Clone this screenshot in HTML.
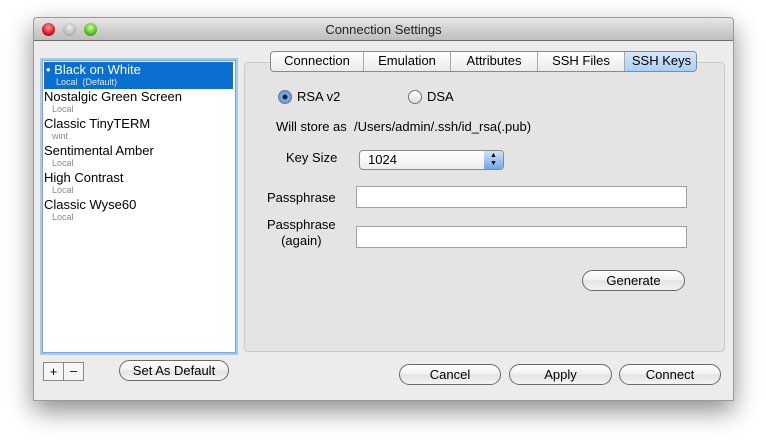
<!DOCTYPE html>
<html><head><style>
*{margin:0;padding:0;box-sizing:border-box}
body{width:766px;height:448px;background:#fff;font-family:"Liberation Sans",sans-serif;font-size:13px;color:#000;position:relative;overflow:hidden}
.a{position:absolute}
.win{left:33px;top:17px;width:701px;height:384px;background:#ececec;border:1px solid #9a9a9a;box-shadow:0 10px 25px rgba(0,0,0,.45);border-radius:4px 4px 0 0}
.title{left:0;top:0;width:699px;height:23px;background:linear-gradient(#e6e6e6,#bdbdbd);border-bottom:1px solid #6e6e6e;border-radius:4px 4px 0 0;text-align:center;line-height:23px;font-size:13px;color:#222}
.dot{width:13px;height:13px;border-radius:50%;top:5px}
.btn{border:1px solid #6a6a6a;border-radius:11px;background:linear-gradient(#fff,#f0f0f0 50%,#e2e2e2 51%,#f4f4f4);text-align:center;font-size:13px;height:21px;line-height:19px}
.tab{top:0;height:20px;line-height:18px;text-align:center;border-right:1px solid #a8a8a8}
.it{left:0;width:189px;padding-left:0;height:27px}
.it b{font-weight:normal;display:block;font-size:13px;line-height:14px;margin-top:1px}
.it i{font-style:normal;display:block;font-size:9px;color:#8a8a8a;padding-left:8px;line-height:10px}
.fld{background:#fff;border:1px solid #a0a0a0;height:22px}
.rad{width:14px;height:14px;border-radius:50%;border:1px solid #777}
</style></head><body>
<div class="a win">
 <div class="a title">Connection Settings
  <div class="a dot" style="left:8px;background:radial-gradient(circle at 50% 35%,#f99,#d12 60%,#900)"></div>
  <div class="a dot" style="left:29px;background:radial-gradient(circle at 50% 35%,#eee,#bbb 60%,#888)"></div>
  <div class="a dot" style="left:50px;background:radial-gradient(circle at 50% 35%,#cf9,#5b2 60%,#270)"></div>
 </div>
 <div class="a" style="left:8px;top:42px;width:194px;height:293px;background:#fff;border:1px solid #7aa7e0;box-shadow:0 0 0 2px #a9c8ee"></div>
 <div class="a" style="left:10px;top:44px;width:190px;height:289px;overflow:hidden">
  <div class="a it" style="top:0;background:#0a6fd1;color:#fff"><b style="padding-left:2px">&#8226; Black on White</b><i style="color:#dfe8f5;padding-left:12px">Local&nbsp; (Default)</i></div>
  <div class="a it" style="top:27px"><b>Nostalgic Green Screen</b><i>Local</i></div>
  <div class="a it" style="top:54px"><b>Classic TinyTERM</b><i>wint</i></div>
  <div class="a it" style="top:81px"><b>Sentimental Amber</b><i>Local</i></div>
  <div class="a it" style="top:108px"><b>High Contrast</b><i>Local</i></div>
  <div class="a it" style="top:135px"><b>Classic Wyse60</b><i>Local</i></div>
 </div>
 <div class="a" style="left:9px;top:344px;width:41px;height:19px;border:1px solid #8a8a8a;background:#f6f6f6">
  <div class="a" style="left:0;top:0;width:20px;height:17px;border-right:1px solid #8a8a8a;text-align:center;line-height:17px">+</div>
  <div class="a" style="left:20px;top:0;width:19px;height:17px;text-align:center;line-height:16px">–</div>
 </div>
 <div class="a btn" style="left:85px;top:342px;width:110px">Set As Default</div>
 <div class="a" style="left:210px;top:44px;width:481px;height:290px;background:#e4e4e4;border:1px solid #c9c9c9;border-radius:4px"></div>
 <div class="a" style="left:236px;top:33px;width:427px;height:21px;border:1px solid #8a8a8a;border-radius:4px;background:linear-gradient(#fff,#ececec);overflow:hidden">
  <div class="a tab" style="left:0;width:93px">Connection</div>
  <div class="a tab" style="left:93px;width:87px">Emulation</div>
  <div class="a tab" style="left:180px;width:87px">Attributes</div>
  <div class="a tab" style="left:267px;width:87px">SSH Files</div>
  <div class="a tab" style="left:354px;width:73px;border:none;background:linear-gradient(#d6e8fb,#a8cdf3)">SSH Keys</div>
 </div>
 <div class="a rad" style="left:244px;top:72px;background:radial-gradient(circle,#123 0 2px,#7fb2ea 3px,#3d86d8)"></div>
 <div class="a" style="left:263px;top:71px">RSA v2</div>
 <div class="a rad" style="left:374px;top:72px;background:linear-gradient(#fff,#ddd)"></div>
 <div class="a" style="left:393px;top:71px">DSA</div>
 <div class="a" style="left:242px;top:101px">Will store as&nbsp; /Users/admin/.ssh/id_rsa(.pub)</div>
 <div class="a" style="left:252px;top:132px">Key Size</div>
 <div class="a" style="left:325px;top:132px;width:145px;height:20px;border:1px solid #8a8a8a;border-radius:4px;background:linear-gradient(#fff,#eee);line-height:18px;padding-left:8px">1024
  <div class="a" style="right:0;top:0;width:19px;height:18px;background:linear-gradient(#cfe3fa,#6fa8e8);border-radius:0 3px 3px 0;font-size:7px;line-height:8px;text-align:center;padding-top:1px">▲<br>▼</div>
 </div>
 <div class="a" style="left:233px;top:172px">Passphrase</div>
 <div class="a fld" style="left:322px;top:168px;width:331px"></div>
 <div class="a" style="left:233px;top:199px;text-align:center;line-height:16px">Passphrase<br>(again)</div>
 <div class="a fld" style="left:322px;top:208px;width:331px"></div>
 <div class="a btn" style="left:548px;top:252px;width:103px">Generate</div>
 <div class="a btn" style="left:365px;top:346px;width:102px">Cancel</div>
 <div class="a btn" style="left:475px;top:346px;width:103px">Apply</div>
 <div class="a btn" style="left:585px;top:346px;width:102px">Connect</div>
</div>
</body></html>
